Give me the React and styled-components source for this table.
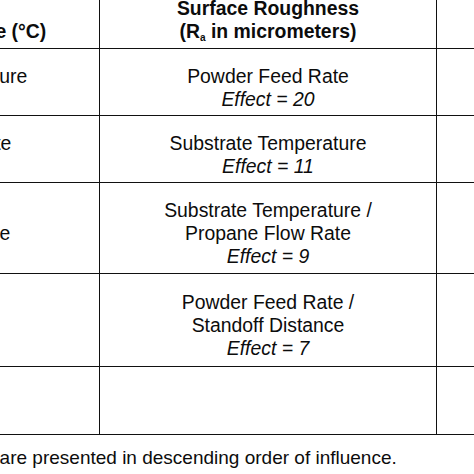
import React from 'react';
import styled, { createGlobalStyle } from 'styled-components';

const GlobalStyle = createGlobalStyle`
  html, body {
    margin: 0;
    padding: 0;
    background: #fff;
    overflow: hidden;
  }
  body {
    font-family: 'Liberation Sans', Arial, Helvetica, sans-serif;
    color: #0c0c0c;
  }
`;

const rows = [
  {
    height: 67,
    left: ['Chamber Temperature', 'Effect = 25'],
    mid: ['Powder Feed Rate', 'Effect = 20'],
  },
  {
    height: 67,
    left: ['Powder Feed Rate', 'Effect = 14'],
    mid: ['Substrate Temperature', 'Effect = 11'],
  },
  {
    height: 91,
    left: ['Standoff /', 'Oxygen Flow Rate', 'Effect = 8'],
    mid: ['Substrate Temperature /', 'Propane Flow Rate', 'Effect = 9'],
  },
  {
    height: 93,
    left: [],
    mid: ['Powder Feed Rate /', 'Standoff Distance', 'Effect = 7'],
  },
  {
    height: 68,
    left: [],
    mid: [],
  },
];

const Page = () => (
  <Wrapper>
    <Table>
      <colgroup>
        <col style={{ width: 338 }} />
        <col style={{ width: 337 }} />
        <col style={{ width: 240 }} />
      </colgroup>
      <thead>
        <tr>
          <HeadCell>Particle Temperature (°C)</HeadCell>
          <HeadCell>
            Surface Roughness
            <br />
            (R<Sub>a</Sub> in micrometers)
          </HeadCell>
          <HeadCell />
        </tr>
      </thead>
      <tbody>
        {rows.map((row, i) => (
          <Row key={i} $height={row.height}>
            <Cell>{renderLines(row.left)}</Cell>
            <Cell>{renderLines(row.mid)}</Cell>
            <Cell />
          </Row>
        ))}
      </tbody>
    </Table>
    <Caption>Factors are presented in descending order of influence.</Caption>
  </Wrapper>
);

function renderLines(lines) {
  return lines.map((line, i) =>
    line.startsWith('Effect') ? (
      <Effect key={i}>{line}</Effect>
    ) : (
      <Line key={i}>{line}</Line>
    )
  );
}

const Wrapper = styled.div`
  margin-left: -239px;
  margin-top: -32px;
  width: 960px;
`;

const Table = styled.table`
  border-collapse: collapse;
  table-layout: fixed;
  width: 915px;
  font-size: 19.4px;
  line-height: 23px;
`;

const HeadCell = styled.th`
  height: 80px;
  padding: 0 0 5px;
  vertical-align: bottom;
  text-align: center;
  font-weight: 700;
  border: 1.5px solid #111;
  box-sizing: border-box;
`;

const Sub = styled.sub`
  font-size: 10px;
  line-height: 0;
  vertical-align: -3px;
`;

const Row = styled.tr`
  height: ${(p) => p.$height}px;
`;

const Cell = styled.td`
  padding: 11px 0 0;
  vertical-align: middle;
  text-align: center;
  border: 1.5px solid #111;
  box-sizing: border-box;
`;

const Line = styled.div`
  white-space: nowrap;
`;

const Effect = styled.div`
  font-style: italic;
  white-space: nowrap;
`;

const Caption = styled.p`
  margin: 11px 0 0 170px;
  font-size: 19px;
  line-height: 23px;
  white-space: nowrap;
`;

export default function App() {
  return (
    <>
      <GlobalStyle />
      <Page />
    </>
  );
}
